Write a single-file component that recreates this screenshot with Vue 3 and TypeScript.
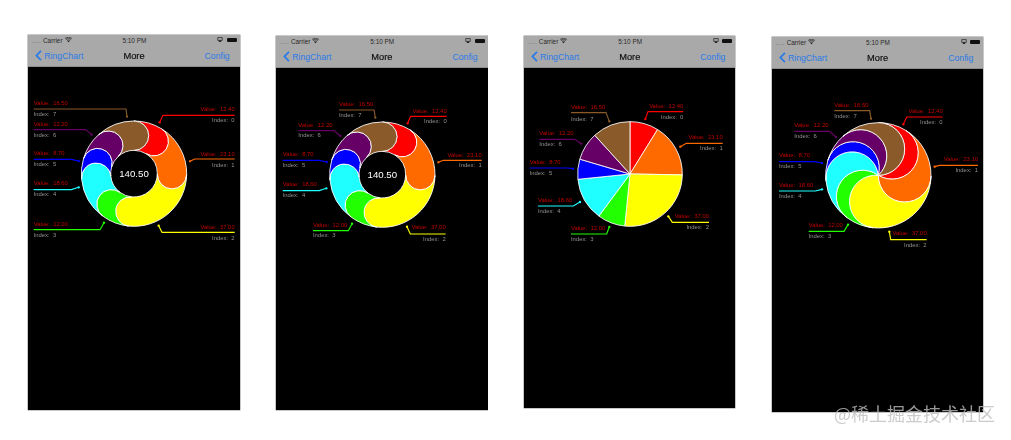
<script setup lang="ts">
type Label = { dot: [number, number]; elbow: [number, number]; end: number; vy: number; iy: number }
type Chart = {
  key: number; kind: 'ring' | 'pie' | 'spiral'; cx: number; cy: number; R: number
  left: number; navBottom: number; top: number; height: number; labels: Label[]
}
const values = [12.4, 23.1, 37, 12, 18.6, 8.7, 12.2, 16.5]
const colors = ['#ff0000', '#ff6a00', '#ffff00', '#22ff00', '#1fffff', '#0000ff', '#660066', '#8a5a2b']
const total = values.reduce((a, b) => a + b, 0)
const L = (dx: number, dy: number, ex: number, ey: number, end: number, vy: number, iy: number): Label => ({
  dot: [dx, dy], elbow: [ex, ey], end, vy, iy
})
const charts: Chart[] = [
  { key: 1, kind: 'ring', cx: 343, cy: 432, R: 158, left: 25, navBottom: 112, top: 0, height: 375.3, labels: [
    L(420, 278, 430, 257, 645, 245, 278), L(511, 395, 525, 388, 645, 378, 412), L(417, 588, 427, 608, 645, 597, 630),
    L(253, 579, 241, 600, 42, 588, 621), L(177, 473, 155, 480, 42, 467, 500), L(177, 394, 155, 389, 42, 377, 410),
    L(216, 315, 198, 300, 42, 288, 321), L(322, 261, 319, 238, 42, 226, 258)] },
  { key: 2, kind: 'ring', cx: 337, cy: 434, R: 158, left: 18, navBottom: 114, top: 1, height: 374.3, labels: [
    L(413, 280, 422, 259, 530, 248, 280), L(505, 397, 520, 391, 635, 380, 412), L(411, 590, 421, 612, 527, 598, 632),
    L(246, 581, 235, 602, 129, 590, 622), L(169, 475, 148, 482, 38, 469, 502), L(170, 396, 148, 391, 38, 379, 411),
    L(211, 318, 192, 302, 85, 290, 322), L(316, 263, 312, 240, 207, 229, 260)] },
  { key: 3, kind: 'pie', cx: 336, cy: 430, R: 157, left: 18, navBottom: 112, top: 1, height: 371.7, labels: [
    L(382, 265, 390, 243, 496, 232, 264), L(487, 348, 505, 338, 614, 326, 358), L(451, 557, 463, 575, 573, 563, 596),
    L(274, 589, 266, 610, 159, 598, 632), L(186, 514, 166, 526, 60, 514, 547), L(165, 414, 148, 412, 35, 400, 432),
    L(190, 339, 170, 326, 64, 314, 347), L(274, 272, 264, 246, 159, 235, 270)] },
  { key: 4, kind: 'spiral', cx: 339, cy: 437, R: 158, left: 20, navBottom: 118, top: 2, height: 374.7, labels: [
    L(414, 284, 424, 262, 532, 251, 283), L(508, 411, 523, 407, 638, 395, 428), L(372, 606, 376, 630, 484, 617, 651),
    L(248, 585, 236, 605, 130, 592, 626), L(170, 479, 150, 484, 41, 473, 505), L(170, 400, 148, 396, 41, 383, 415),
    L(212, 322, 193, 305, 87, 293, 326), L(317, 267, 313, 243, 207, 232, 264)] }
]

function pt(c: Chart, deg: number, r: number): string {
  const a = (deg * Math.PI) / 180
  return `${(c.cx + r * Math.cos(a)).toFixed(2)} ${(c.cy + r * Math.sin(a)).toFixed(2)}`
}
function segments(c: Chart) {
  let start = -90
  return values.map((v, i) => {
    const sweep = (v / total) * 360
    const a0 = start
    const a1 = start + sweep
    start = a1
    const big = sweep > 180 ? 1 : 0
    let d: string
    if (c.kind === 'pie') {
      d = `M${c.cx} ${c.cy} L${pt(c, a0, c.R)} A${c.R} ${c.R} 0 ${big} 1 ${pt(c, a1, c.R)} Z`
    } else {
      const r = c.kind === 'ring' ? 70 : 0
      const cap = (c.R - r) / 2
      d = `M${pt(c, a0, c.R)} A${c.R} ${c.R} 0 ${big} 1 ${pt(c, a1, c.R)} ` +
        `A${cap} ${cap} 0 0 1 ${pt(c, a1, r)} ` +
        (r ? `A${r} ${r} 0 ${big} 0 ${pt(c, a0, r)} ` : '') +
        `A${cap} ${cap} 0 0 0 ${pt(c, a0, c.R)} Z`
    }
    return { d, color: colors[i] }
  })
}
function viewBox(c: Chart): string {
  return `${c.left} ${c.navBottom} 634.2 ${((c.height - 32) * 3).toFixed(1)}`
}
function isRight(l: Label): boolean {
  return l.end > l.elbow[0]
}
function valueText(i: number): string {
  return `Value:\u00a0\u00a0${values[i].toFixed(2)}`
}
function indexText(i: number): string {
  return `Index:\u00a0\u00a0${i}`
}
</script>

<template>
  <div class="page">
    <section
      v-for="c in charts"
      :key="c.key"
      class="phone"
      :style="{ marginTop: c.top + 'px', height: c.height + 'px' }"
    >
      <div class="status">
        <span class="status-left">
          <span class="dots">....</span>
          <span>Carrier</span>
          <svg class="wifi" viewBox="0 0 12 9" aria-hidden="true">
            <path d="M6 8.8 4.3 6.9a2.6 2.6 0 0 1 3.4 0Z" fill="#111" />
            <path d="M3.4 5.9a4 4 0 0 1 5.2 0" fill="none" stroke="#111" stroke-width="1.1" />
            <path d="M1.6 4a6.6 6.6 0 0 1 8.8 0" fill="none" stroke="#111" stroke-width="1.1" />
            <path d="M.2 2.2a8.8 8.8 0 0 1 11.6 0" fill="none" stroke="#111" stroke-width="1.1" />
          </svg>
        </span>
        <span class="clock">5:10 PM</span>
        <span class="status-right">
          <svg class="cast" viewBox="0 0 8 7" aria-hidden="true">
            <path d="M1 .8h6v3.8H1Z" fill="none" stroke="#222" stroke-width="1" />
            <path d="M4 3.6 6 6.6H2Z" fill="#222" />
          </svg>
          <span class="battery"></span>
        </span>
      </div>
      <nav class="nav">
        <span class="back">
          <svg class="chevron" viewBox="0 0 8 12" aria-hidden="true">
            <path d="M6.8 .8 1.6 6l5.2 5.2" fill="none" stroke="#2a7be8" stroke-width="2" />
          </svg>
          RingChart
        </span>
        <span class="title">More</span>
        <span class="config">Config</span>
      </nav>
      <svg class="chart" :viewBox="viewBox(c)" preserveAspectRatio="xMinYMin meet">
        <path
          v-for="(s, i) in segments(c)"
          :key="i"
          :d="s.d"
          :fill="s.color"
          stroke="#fff"
          stroke-width="2.6"
          stroke-linejoin="round"
        />
        <text v-if="c.kind === 'ring'" :x="c.cx" :y="c.cy + 10" class="total" text-anchor="middle">140.50</text>
        <g v-for="(l, i) in c.labels" :key="i">
          <polyline
            :points="`${l.dot[0]},${l.dot[1]} ${l.elbow[0]},${l.elbow[1]} ${l.end},${l.elbow[1]}`"
            fill="none"
            :stroke="colors[i]"
            stroke-width="3.4"
          />
          <circle :cx="l.dot[0]" :cy="l.dot[1]" r="3.5" :fill="colors[i]" />
          <text :x="l.end" :y="l.vy" class="value" :text-anchor="isRight(l) ? 'end' : 'start'">{{ valueText(i) }}</text>
          <text :x="l.end" :y="l.iy" class="index" :text-anchor="isRight(l) ? 'end' : 'start'">{{ indexText(i) }}</text>
        </g>
      </svg>
    </section>
    <span class="watermark">@稀土掘金技术社区</span>
  </div>
</template>

<style scoped>
.page {
  position: relative;
  display: flex;
  align-items: flex-start;
  gap: 36.5px;
  box-sizing: border-box;
  width: 1011px;
  height: 440px;
  padding: 35px 0 0 28.3px;
  overflow: hidden;
  background: #fff;
  font-family: "Liberation Sans", Arial, sans-serif;
}
.phone {
  display: flex;
  flex-direction: column;
  flex: none;
  width: 211.4px;
  background: #000;
  box-shadow: 0 0 0 0.4px #777;
  filter: blur(0.55px);
}
.status {
  display: grid;
  grid-template-columns: 1fr auto 1fr;
  align-items: center;
  height: 10px;
  padding: 0 3px 0 3.7px;
  box-sizing: border-box;
  background: #a9a9a9;
  font-size: 6.4px;
  color: #2a2a2a;
}
.status-left {
  display: flex;
  align-items: center;
  gap: 2px;
}
.dots {
  width: 9px;
  color: #666;
  letter-spacing: 0.6px;
}
.wifi {
  width: 7px;
  height: 5.5px;
}
.status-right {
  display: flex;
  justify-content: flex-end;
  align-items: center;
  gap: 3.5px;
}
.cast {
  width: 6px;
  height: 5.2px;
}
.battery {
  width: 10px;
  height: 4.4px;
  background: #111;
  border-radius: 1px;
}
.nav {
  display: grid;
  grid-template-columns: 1fr auto 1fr;
  align-items: center;
  height: 22px;
  padding: 0 10px 0 7px;
  box-sizing: border-box;
  background: #a9a9a9;
  border-bottom: 1px solid #8e8e8e;
  font-size: 8.7px;
}
.back {
  display: flex;
  align-items: center;
  gap: 2px;
  color: #2a7be8;
}
.chevron {
  width: 7px;
  height: 11px;
}
.title {
  position: relative;
  left: 1.5px;
  color: #0c0c0c;
  font-size: 9.3px;
  -webkit-text-stroke: 0.15px #0c0c0c;
}
.config {
  color: #2a7be8;
  text-align: right;
}
.chart {
  display: block;
  flex: 1;
  width: 100%;
  min-height: 0;
}
.total {
  fill: #fff;
  font-size: 29px;
}
.value,
.index {
  font-size: 17.7px;
}
.value {
  fill: #c40000;
}
.index {
  fill: #939393;
}
.watermark {
  position: absolute;
  left: 834px;
  top: 403px;
  color: rgba(190, 190, 190, 0.8);
  font-family: "Noto Sans CJK SC", sans-serif;
  font-size: 18px;
  line-height: 21px;
  white-space: nowrap;
}
</style>
